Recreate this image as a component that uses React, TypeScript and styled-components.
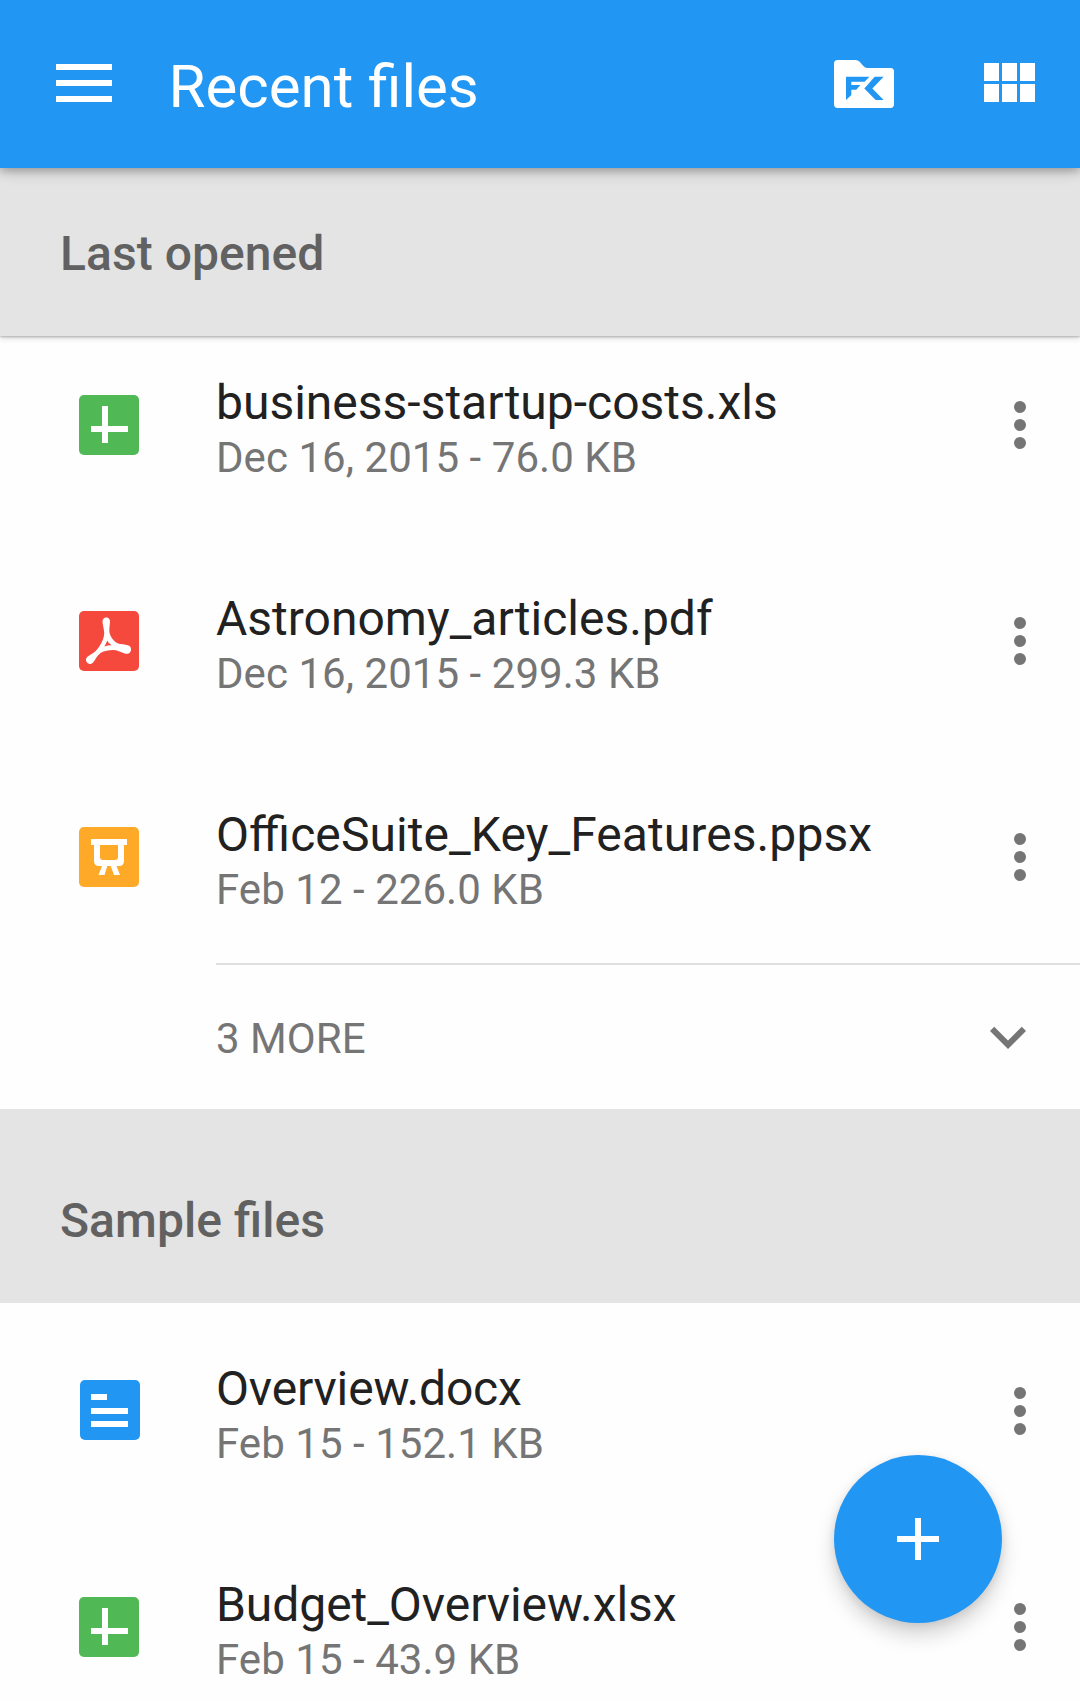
import React from "react";
import styled, { createGlobalStyle } from "styled-components";

const GlobalStyle = createGlobalStyle`
  * { box-sizing: border-box; }
  html, body { margin: 0; height: 100%; overflow: hidden; }
  body { font-family: Roboto, "Noto Sans", sans-serif; background: #fff; }
  button { border: 0; padding: 0; background: none; font: inherit; color: inherit; }
  svg { display: block; }
`;

const Screen = styled.div`
  position: relative;
  display: flex;
  flex-direction: column;
  width: 1080px;
  height: 1701px;
  overflow: hidden;
  background: #fefefe;
`;

const AppBar = styled.header`
  position: relative;
  z-index: 3;
  flex: none;
  display: flex;
  align-items: flex-start;
  height: 168px;
  padding: 48px 45px 0 56px;
  background: #2296f3;
  color: #fff;
  box-shadow: 0 2px 14px rgba(0, 0, 0, 0.28), 0 3px 7px rgba(0, 0, 0, 0.14);
`;

const MenuButton = styled.button`
  padding-top: 16px;
`;

const Title = styled.h1`
  flex: 1;
  margin: 4px 0 0 56.5px;
  font-size: 60px;
  font-weight: 400;
  line-height: 70px;
`;

const Actions = styled.div`
  display: flex;
  align-items: flex-start;
  gap: 90px;
  padding-top: 12px;
`;

const GridButton = styled.button`
  padding-top: 3px;
`;

const SectionHeader = styled.h2<{ $height: number; $top: number; $pinned?: boolean }>`
  position: relative;
  z-index: ${(p) => (p.$pinned ? 2 : 0)};
  flex: none;
  margin: 0;
  height: ${(p) => p.$height}px;
  padding: ${(p) => p.$top}px 60px 0;
  background: #e4e4e4;
  color: #616161;
  font-size: 48px;
  font-weight: 500;
  line-height: 56px;
  letter-spacing: 0.06px;
  font-feature-settings: "liga" 1;
  box-shadow: ${(p) => (p.$pinned ? "0 1px 2px rgba(0,0,0,.22), 0 2px 6px rgba(0,0,0,.16)" : "none")};
`;

const FileList = styled.div<{ $tucked?: boolean }>`
  flex: none;
  display: flex;
  flex-direction: column;
  margin-top: ${(p) => (p.$tucked ? -19 : 0)}px;
`;

const Row = styled.div`
  display: flex;
  align-items: center;
  height: 216px;
  padding: 0 54px 0 79px;
`;

const IconTile = styled.div<{ $color: string; $shift: number }>`
  flex: none;
  width: 60px;
  height: 60px;
  margin: 0 ${(p) => -p.$shift}px ${(p) => p.$shift * 2}px ${(p) => p.$shift}px;
  border-radius: 5px;
  background: ${(p) => p.$color};
`;

const FileText = styled.div`
  flex: 1;
  align-self: flex-start;
  margin: 58px 0 0 77px;
  white-space: nowrap;
`;

const FileName = styled.div<{ $spacing: number }>`
  color: #212121;
  font-size: 48px;
  line-height: 56px;
  letter-spacing: ${(p) => p.$spacing}px;
  font-feature-settings: "liga" 1;
`;

const FileMeta = styled.div`
  color: #757575;
  font-size: 42px;
  line-height: 54px;
  letter-spacing: 0.05px;
`;

const MoreDots = styled.button`
  display: flex;
  flex-direction: column;
  gap: 6px;
`;

const Dot = styled.span`
  width: 12px;
  height: 12px;
  border-radius: 50%;
  background: #757575;
`;

const Divider = styled.hr`
  width: 864px;
  height: 2px;
  margin: -2px 0 0 216px;
  border: 0;
  background: #dfdfdf;
`;

const ExpandRow = styled.button`
  display: flex;
  align-items: center;
  justify-content: space-between;
  height: 144px;
  padding: 0 36px 0 216px;
  color: #757575;
  font-size: 42px;
  line-height: 50px;
`;

const ExpandLabel = styled.span`
  padding-top: 4px;
  letter-spacing: 0.05px;
`;

const Fab = styled.button`
  position: absolute;
  z-index: 4;
  left: 834px;
  top: 1455px;
  display: grid;
  place-items: center;
  width: 168px;
  height: 168px;
  border-radius: 50%;
  background: #2296f3;
  box-shadow: 0 12px 20px rgba(0, 0, 0, 0.17), 0 2px 8px rgba(0, 0, 0, 0.09);
`;

type Kind = "sheet" | "pdf" | "slides" | "doc";

const tileColors: Record<Kind, string> = {
  sheet: "#50b855",
  pdf: "#f6493d",
  slides: "#ffa929",
  doc: "#2296f3",
};

const glyphs: Record<Kind, React.ReactNode> = {
  sheet: <path fill="#fff" d="M23 11h6v20h20v6H29v11h-6V37H12v-6h11z" />,
  pdf: (
    <path
      fill="#fff"
      fillRule="evenodd"
      d="M27 6.5C29.3 6.2 31.1 8 31 10.500C30.900 13.500 30.200 17 30.300 20C30.600 24.500 34 30 38.500 32.300C41.500 33.400 46 33.300 49.500 34.600C52.500 35.900 52.800 39.500 51 41.500C49.500 43.100 47.200 43 45 42.200C41.500 40.900 38.500 39.100 34 39C29.500 39 25.500 39.700 21.500 42C18.500 44 16.500 48.500 14.300 51.200C12.400 53.500 9.500 53.500 7.800 51.300C6.200 49 7.200 46.500 9.500 45C12.500 43 16 41.300 18.500 38C21.500 34 25.200 28 25.200 22C25.200 18 23.500 13.500 23.500 10.500C23.500 8 25 6.700 27 6.500ZM28.200 29.500C27.600 31.500 26.500 33.700 25.300 35.400C27.500 34.700 30 34.300 32.700 34.200C31 33 29.200 31.500 28.200 29.500Z"
    />
  ),
  slides: (
    <path
      fill="#fff"
      fillRule="evenodd"
      d="M12 12H48V18H45V34Q45 39 40 39H37.500L41 48H35L31.700 39H28.300L25.500 48H19.500L23 39H20Q15 39 15 34V18H12ZM21 18V30Q21 33 24 33H36Q39 33 39 30V18Z"
    />
  ),
  doc: <path fill="#fff" d="M11 14h16v6H11zM11 28h37v6H11zM11 41h37v6H11z" />,
};

interface FileItem {
  name: string;
  meta: string;
  kind: Kind;
  spacing?: number;
}

const recent: FileItem[] = [
  { name: "business-startup-costs.xls", meta: "Dec 16, 2015 - 76.0 KB", kind: "sheet" },
  { name: "Astronomy_articles.pdf", meta: "Dec 16, 2015 - 299.3 KB", kind: "pdf" },
  { name: "OfficeSuite_Key_Features.ppsx", meta: "Feb 12 - 226.0 KB", kind: "slides", spacing: 0.08 },
];

const samples: FileItem[] = [
  { name: "Overview.docx", meta: "Feb 15 - 152.1 KB", kind: "doc", spacing: -0.15 },
  { name: "Budget_Overview.xlsx", meta: "Feb 15 - 43.9 KB", kind: "sheet", spacing: -0.05 },
];

function FileRow({ file }: { file: FileItem }) {
  return (
    <Row>
      <IconTile $color={tileColors[file.kind]} $shift={file.kind === "doc" ? 1 : 0}>
        <svg width="60" height="60" viewBox="0 0 60 60">{glyphs[file.kind]}</svg>
      </IconTile>
      <FileText>
        <FileName $spacing={file.spacing ?? 0}>{file.name}</FileName>
        <FileMeta>{file.meta}</FileMeta>
      </FileText>
      <MoreDots aria-label="File options">
        <Dot />
        <Dot />
        <Dot />
      </MoreDots>
    </Row>
  );
}

export default function App() {
  return (
    <>
      <GlobalStyle />
      <Screen>
        <AppBar>
          <MenuButton aria-label="Menu">
            <svg width="56" height="38" viewBox="0 0 56 38" fill="#fff">
              <path d="M0 0h56v6H0zM0 16h56v6H0zM0 32h56v6H0z" />
            </svg>
          </MenuButton>
          <Title>Recent files</Title>
          <Actions>
            <button aria-label="File manager">
              <svg width="60" height="48" viewBox="0 0 180 144">
                <path
                  fill="#fff"
                  d="M11 0H65Q72 0 77 5L88 18Q93 24 100 24H170Q180 24 180 35V133Q180 144 169 144H11Q0 144 0 133V11Q0 0 11 0Z"
                />
                <path
                  fill="#2296f3"
                  d="M36 50H106L92 65H52V75H79L67 89H52V105L36 120ZM122 50H149L115 85.500L149 120H125L91 85.500Z"
                />
              </svg>
            </button>
            <GridButton aria-label="Grid view">
              <svg width="51" height="39" viewBox="0 0 51 39" fill="#fff">
                <path d="M0 0h15v18H0zM18 0h15v18H18zM36 0h15v18H36zM0 21h15v18H0zM18 21h15v18H18zM36 21h15v18H36z" />
              </svg>
            </GridButton>
          </Actions>
        </AppBar>
        <SectionHeader $height={168} $top={58} $pinned>
          Last opened
        </SectionHeader>
        <FileList $tucked>
          {recent.map((f) => (
            <FileRow key={f.name} file={f} />
          ))}
          <Divider />
          <ExpandRow>
            <ExpandLabel>3 MORE</ExpandLabel>
            <svg width="72" height="72" viewBox="0 0 24 24" fill="#757575">
              <path d="M16.590 8.590L12 13.170 7.410 8.590 6 10l6 6 6-6z" />
            </svg>
          </ExpandRow>
        </FileList>
        <SectionHeader $height={194} $top={84}>
          Sample files
        </SectionHeader>
        <FileList>
          {samples.map((f) => (
            <FileRow key={f.name} file={f} />
          ))}
        </FileList>
        <Fab aria-label="New file">
          <svg width="42" height="42" viewBox="0 0 42 42" fill="#fff">
            <path d="M18 0h6v18h18v6H24v18h-6V24H0v-6h18z" />
          </svg>
        </Fab>
      </Screen>
    </>
  );
}
